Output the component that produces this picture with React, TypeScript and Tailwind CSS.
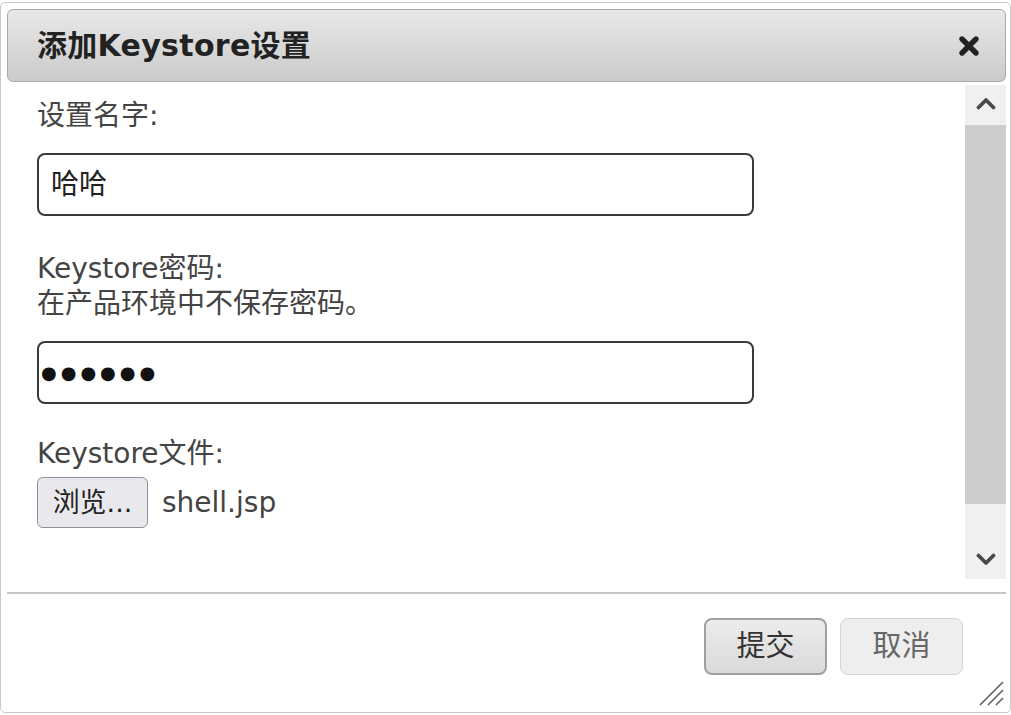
import React from 'react'

const font = { fontFamily: '"DejaVu Sans", "Noto Sans CJK SC", sans-serif' }

function ChevronUp() {
  return (
    <svg width="20" height="13" viewBox="0 0 20 13" fill="none">
      <path d="M2.5 10.5 L10 3 L17.5 10.5" stroke="#4a4a4a" strokeWidth="3.8" strokeLinecap="round" strokeLinejoin="round" />
    </svg>
  )
}

function ChevronDown() {
  return (
    <svg width="20" height="13" viewBox="0 0 20 13" fill="none">
      <path d="M2.5 2.5 L10 10 L17.5 2.5" stroke="#4a4a4a" strokeWidth="3.8" strokeLinecap="round" strokeLinejoin="round" />
    </svg>
  )
}

function CloseIcon() {
  return (
    <svg width="24" height="24" viewBox="0 0 24 24">
      <path d="M5 5 L19 19 M19 5 L5 19" stroke="#222" strokeWidth="5.4" strokeLinecap="round" />
    </svg>
  )
}

function ResizeGrip() {
  return (
    <svg width="28" height="28" viewBox="0 0 28 28">
      <path d="M26 3 L3 26 M26 11 L11 26 M26 19 L19 26" stroke="#666" strokeWidth="1.7" />
    </svg>
  )
}

export default function App() {
  return (
    <div className="w-[1011px] h-[715px] bg-white pt-[2px]" style={font}>
      <div className="relative w-[1011px] h-[711px] rounded-[5px] border border-[#c8c8c8] bg-white pl-[6px] pr-[4px] pt-[6px] flex flex-col">
        <div className="h-[73px] shrink-0 rounded-[6px] border border-[#aaaaaa] bg-gradient-to-b from-[#e8e8e8] to-[#cbcbcb] flex items-center justify-between pl-[29px] pr-[24px]">
          <span className="text-[30px] font-bold text-[#222] tracking-[0.3px]">添加Keystore设置</span>
          <CloseIcon />
        </div>

        <div className="h-[497px] shrink-0 flex">
          <div className="flex-1 pl-[30px] pt-[16px] text-[28px] leading-[35px] text-[#444]">
            <div>设置名字:</div>
            <div className="mt-[20px] w-[717px] h-[63px] rounded-[8px] border-2 border-[#3a3a3a] flex items-center px-[12px] text-[#222]">
              哈哈
            </div>
            <div className="mt-[35px]">Keystore密码:</div>
            <div>在产品环境中不保存密码。</div>
            <div className="mt-[20px] w-[717px] h-[63px] rounded-[8px] border-2 border-[#3a3a3a] flex items-center pl-[2px] text-[#111] text-[18px] tracking-[4px]">
              ●●●●●●
            </div>
            <div className="mt-[32px]">Keystore文件:</div>
            <div className="mt-[6px] flex items-center gap-[14px]">
              <div className="h-[51px] w-[111px] rounded-[6px] border border-[#8f8f9d] bg-[#e9e9ed] flex items-center justify-center text-[27px] text-[#222]">
                浏览...
              </div>
              <span>shell.jsp</span>
            </div>
          </div>
          <div className="w-[41px] mt-[3px] flex flex-col bg-[#f0f0f0]">
            <div className="h-[40px] flex items-center justify-center pb-[4px]">
              <ChevronUp />
            </div>
            <div className="h-[379px] bg-[#cdcdcd]" />
            <div className="flex-1 flex items-end justify-center pb-[13px]">
              <ChevronDown />
            </div>
          </div>
        </div>

        <div className="mt-[13px] h-[2px] bg-[#c8c8c8] shrink-0" />

        <div className="flex justify-end gap-[13px] pr-[43px] pt-[24px] text-[29px]">
          <div className="w-[123px] h-[57px] rounded-[8px] border-2 border-[#a0a0a0] bg-gradient-to-b from-[#ececec] to-[#dadada] flex items-center justify-center text-[#333]">
            提交
          </div>
          <div className="w-[123px] h-[57px] rounded-[8px] border border-[#d4d4d4] bg-[#eeeeee] flex items-center justify-center text-[#666]">
            取消
          </div>
        </div>

        <div className="absolute right-[5px] bottom-[5px]">
          <ResizeGrip />
        </div>
      </div>
    </div>
  )
}
